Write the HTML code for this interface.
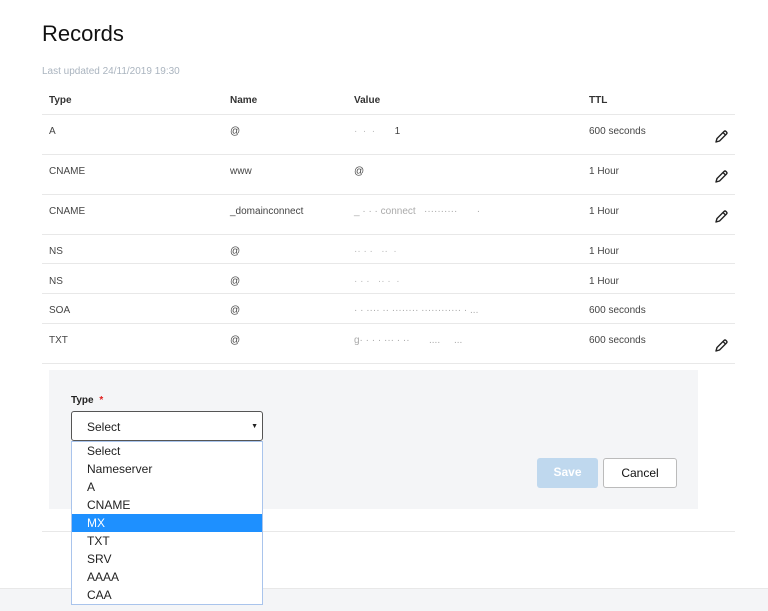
<!DOCTYPE html>
<html><head><style>
*{margin:0;padding:0;box-sizing:border-box}
body{width:768px;height:611px;background:#fff;font-family:"Liberation Sans",sans-serif;color:#333;position:relative;overflow:hidden}
.a{position:absolute}
h1{position:absolute;left:42px;top:21px;font-size:22px;font-weight:normal;color:#111}
.upd{left:42px;top:66px;font-size:10px;color:#aab4bf}
.th{font-size:10px;font-weight:bold;color:#333;top:95px}
.line{height:1px;background:#e8e8e8;left:42px;width:693px}
.c{font-size:10px;color:#444;margin-top:1px}
.pen{position:absolute;left:713px}
.panel{left:49px;top:370px;width:649px;height:139px;background:#f4f5f7}
.sel{left:71px;top:411px;width:192px;height:30px;border:1px solid #555;border-radius:3px;background:#fff;font-size:12px;color:#222;padding:8px 0 0 15px}
.list{left:71px;top:441px;width:192px;height:164px;border:1px solid #a9c4ec;background:#fff}
.list div{height:18px;font-size:12px;line-height:18px;padding-left:15px;color:#222}
.list .hi{background:#1e90ff;color:#fff}
.btn{font-size:12px;border-radius:3px;text-align:center;line-height:28px;height:30px;top:458px}
</style></head><body>
<h1>Records</h1>
<div class="a upd">Last updated 24/11/2019 19:30</div>
<div class="a th" style="left:49px">Type</div>
<div class="a th" style="left:230px">Name</div>
<div class="a th" style="left:354px">Value</div>
<div class="a th" style="left:589px">TTL</div>
<div class="a line" style="top:114px"></div>
<div class="a line" style="top:154px"></div>
<div class="a line" style="top:194px"></div>
<div class="a line" style="top:234px"></div>
<div class="a line" style="top:263px"></div>
<div class="a line" style="top:293px"></div>
<div class="a line" style="top:323px"></div>
<div class="a line" style="top:363px"></div>

<div class="a c" style="left:49px;top:125px">A</div><div class="a c" style="left:230px;top:125px">@</div><div class="a c" style="left:354px;top:125px;color:#bbb">· &nbsp;· &nbsp;· &nbsp; &nbsp; &nbsp; <span style="color:#444">1</span></div><div class="a c" style="left:589px;top:125px">600 seconds</div>
<div class="a c" style="left:49px;top:165px">CNAME</div><div class="a c" style="left:230px;top:165px">www</div><div class="a c" style="left:354px;top:165px">@</div><div class="a c" style="left:589px;top:165px">1 Hour</div>
<div class="a c" style="left:49px;top:205px">CNAME</div><div class="a c" style="left:230px;top:205px">_domainconnect</div><div class="a c" style="left:354px;top:205px;color:#aaa">_ · ·  · connect &nbsp; ·········· &nbsp; &nbsp; &nbsp; ·</div><div class="a c" style="left:589px;top:205px">1 Hour</div>
<div class="a c" style="left:49px;top:245px">NS</div><div class="a c" style="left:230px;top:245px">@</div><div class="a c" style="left:354px;top:245px;color:#bbb">·· · · &nbsp; ·· &nbsp;·</div><div class="a c" style="left:589px;top:245px">1 Hour</div>
<div class="a c" style="left:49px;top:275px">NS</div><div class="a c" style="left:230px;top:275px">@</div><div class="a c" style="left:354px;top:275px;color:#bbb">· · · &nbsp; ·· · &nbsp;·</div><div class="a c" style="left:589px;top:275px">1 Hour</div>
<div class="a c" style="left:49px;top:304px">SOA</div><div class="a c" style="left:230px;top:304px">@</div><div class="a c" style="left:354px;top:304px;color:#aaa">· · ···· ·· ········ ············ · ...</div><div class="a c" style="left:589px;top:304px">600 seconds</div>
<div class="a c" style="left:49px;top:334px">TXT</div><div class="a c" style="left:230px;top:334px">@</div><div class="a c" style="left:354px;top:334px;color:#aaa">g· · · · ··· · ·· &nbsp; &nbsp; &nbsp; .... &nbsp; &nbsp; ...</div><div class="a c" style="left:589px;top:334px">600 seconds</div>

<svg class="pen" style="top:129px" width="16" height="16" viewBox="0 0 16 16"><path d="M3 13 L4 9.5 L11 2.5 Q12 1.5 13 2.5 L13.5 3 Q14.5 4 13.5 5 L6.5 12 Z M10 3.5 L12.5 6" fill="none" stroke="#222" stroke-width="1.4" stroke-linejoin="round"/></svg>
<svg class="pen" style="top:169px" width="16" height="16" viewBox="0 0 16 16"><path d="M3 13 L4 9.5 L11 2.5 Q12 1.5 13 2.5 L13.5 3 Q14.5 4 13.5 5 L6.5 12 Z M10 3.5 L12.5 6" fill="none" stroke="#222" stroke-width="1.4" stroke-linejoin="round"/></svg>
<svg class="pen" style="top:209px" width="16" height="16" viewBox="0 0 16 16"><path d="M3 13 L4 9.5 L11 2.5 Q12 1.5 13 2.5 L13.5 3 Q14.5 4 13.5 5 L6.5 12 Z M10 3.5 L12.5 6" fill="none" stroke="#222" stroke-width="1.4" stroke-linejoin="round"/></svg>
<svg class="pen" style="top:338px" width="16" height="16" viewBox="0 0 16 16"><path d="M3 13 L4 9.5 L11 2.5 Q12 1.5 13 2.5 L13.5 3 Q14.5 4 13.5 5 L6.5 12 Z M10 3.5 L12.5 6" fill="none" stroke="#222" stroke-width="1.4" stroke-linejoin="round"/></svg>

<div class="a panel"></div>
<div class="a" style="left:71px;top:395px;font-size:10px;font-weight:bold;color:#222">Type <span style="color:#e0201f;margin-left:3px">*</span></div>
<div class="a sel">Select<span style="position:absolute;right:4px;top:11px;font-size:7px">▼</span></div>
<div class="a btn" style="left:537px;width:61px;background:#bfd8ee;color:#fff;font-weight:bold">Save</div>
<div class="a btn" style="left:603px;width:74px;background:#fff;border:1px solid #bbb;color:#111">Cancel</div>
<div class="a line" style="top:531px"></div>
<div class="a" style="left:0;top:588px;width:768px;height:23px;background:#f4f5f7;border-top:1px solid #e8e8e8"></div>
<div class="a list">
<div>Select</div><div>Nameserver</div><div>A</div><div>CNAME</div><div class="hi">MX</div><div>TXT</div><div>SRV</div><div>AAAA</div><div>CAA</div>
</div>
</body></html>
